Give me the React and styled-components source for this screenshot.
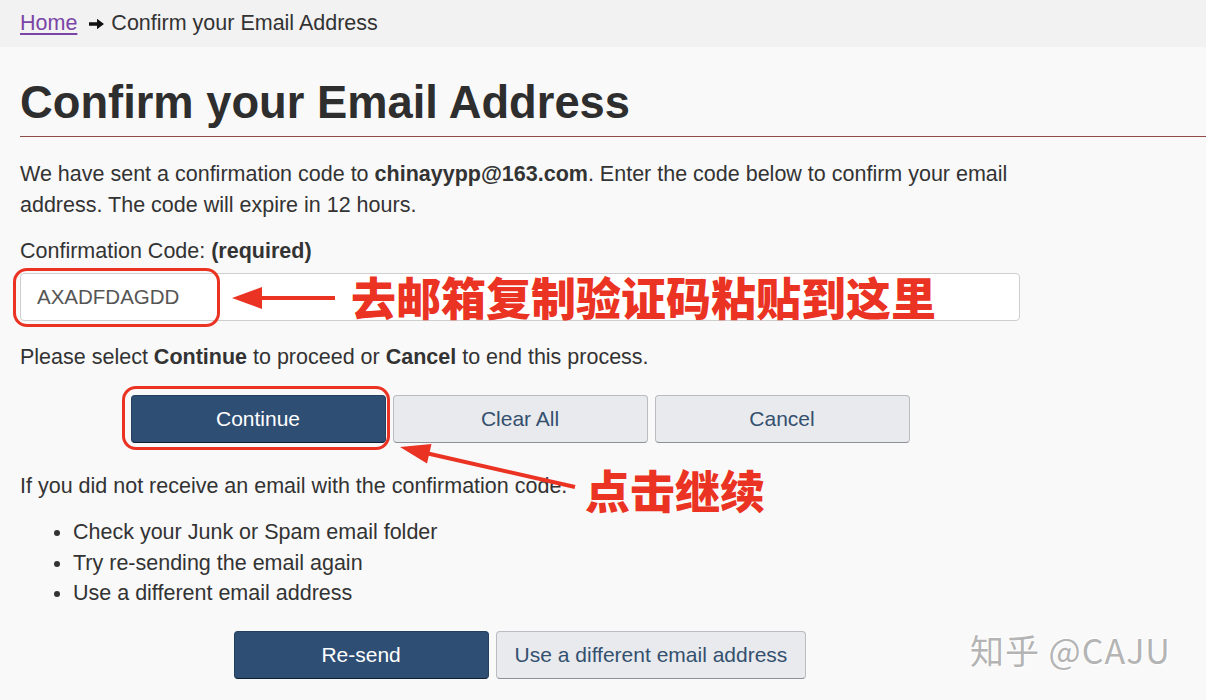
import React from "react";
import styled, { createGlobalStyle } from "styled-components";

const GlobalStyle = createGlobalStyle`
  html, body {
    margin: 0;
    padding: 0;
    background: #f9f9f9;
  }
  body {
    font-family: "Liberation Sans", Arial, Helvetica, sans-serif;
    color: #333;
  }
`;

const Page = styled.div`
  position: relative;
  width: 1206px;
  height: 700px;
  overflow: hidden;
`;

const Breadcrumb = styled.nav`
  height: 47px;
  background: #f2f2f2;
  display: flex;
  align-items: center;
  padding: 0 20px;
  font-size: 21.5px;
  color: #333;
`;

const CrumbLink = styled.a`
  color: #7b45a6;
  text-decoration: underline;
  text-underline-offset: 3px;
`;

const CrumbArrow = styled.svg`
  width: 15px;
  height: 12px;
  margin: 0 7px 0 12px;
`;

const Main = styled.main`
  padding-left: 20px;
`;

const Title = styled.h1`
  margin: 30px 0 0;
  padding-bottom: 7px;
  font-size: 45.3px;
  line-height: 52px;
  font-weight: 700;
  color: #2e2e2e;
  border-bottom: 1px solid #8f4b47;
`;

const Content = styled.div`
  width: 1000px;
  font-size: 21.5px;
  line-height: 31px;
  color: #333;
`;

const Text = styled.p`
  margin: ${(p) => p.$mt}px 0 0;
`;

const FieldWrap = styled.div`
  position: relative;
  margin-top: 6px;
`;

const Input = styled.input`
  display: block;
  box-sizing: border-box;
  width: 1000px;
  height: 48px;
  padding: 0 16px;
  border: 1px solid #cfcfcf;
  border-radius: 4px;
  background: #fff;
  font-family: inherit;
  font-size: 20.5px;
  color: #555;
  outline: none;
`;

const ActionBlock = styled.div`
  position: relative;
  margin-top: ${(p) => p.$mt}px;
`;

const ButtonRow = styled.div`
  display: flex;
  justify-content: center;
  gap: 7px;
`;

const Button = styled.button`
  box-sizing: border-box;
  height: 48px;
  min-width: 255px;
  padding: 0 18px;
  border-radius: 4px;
  font-family: inherit;
  font-size: 21px;
  cursor: pointer;
  background: ${(p) => (p.$primary ? "#2f4e73" : "#e8eaed")};
  color: ${(p) => (p.$primary ? "#fff" : "#34506f")};
  border: 1px solid ${(p) => (p.$primary ? "#24405f" : "#b9bcc0")};
  border-bottom-color: ${(p) => (p.$primary ? "#0f1f33" : "#8d9096")};
`;

const List = styled.ul`
  margin: 15px 0 0;
  padding-left: 53px;
  line-height: 30.5px;
`;

const RedBox = styled.div`
  position: absolute;
  left: ${(p) => p.$x}px;
  top: ${(p) => p.$y}px;
  width: ${(p) => p.$w}px;
  height: ${(p) => p.$h}px;
  box-sizing: border-box;
  border: 3.5px solid #eb3323;
  border-radius: 14px;
  pointer-events: none;
`;

const ArrowSvg = styled.svg`
  position: absolute;
  left: ${(p) => p.$x}px;
  top: ${(p) => p.$y}px;
  overflow: visible;
  pointer-events: none;
`;

const Note = styled.div`
  position: absolute;
  left: ${(p) => p.$x}px;
  top: ${(p) => p.$y}px;
  font-family: "Noto Sans CJK SC", sans-serif;
  font-weight: 900;
  font-size: 45px;
  line-height: 50px;
  color: #eb3323;
  white-space: nowrap;
  pointer-events: none;
`;

const Watermark = styled.div`
  position: absolute;
  left: 970px;
  top: 627px;
  font-family: "Noto Sans CJK SC", sans-serif;
  font-size: 34px;
  line-height: 46px;
  color: #b4b4b4;
  letter-spacing: 1px;
  text-shadow: 0 0 1px #fff, 1px 1px 0 #fff, -1px -1px 0 #fff;
  white-space: nowrap;
`;

const App = () => {
  return (
    <Page>
      <GlobalStyle />
      <Breadcrumb>
        <CrumbLink href="#">Home</CrumbLink>
        <CrumbArrow viewBox="0 0 15 12">
          <path d="M0 4.3h8V0.8l7 5.2-7 5.2V7.7H0z" fill="#111" />
        </CrumbArrow>
        <span>Confirm your Email Address</span>
      </Breadcrumb>

      <Main>
        <Title>Confirm your Email Address</Title>
        <Content>
          <Text $mt={22}>
            We have sent a confirmation code to{" "}
            <strong>chinayypp@163.com</strong>. Enter the code below to confirm
            your email address. The code will expire in 12 hours.
          </Text>
          <Text $mt={15}>
            Confirmation Code: <strong>(required)</strong>
          </Text>
          <FieldWrap>
            <Input type="text" value="AXADFDAGDD" readOnly />
            <RedBox $x={-7} $y={-5} $w={207} $h={59} />
            <ArrowSvg $x={205} $y={10} width="120" height="30">
              <line x1="34" y1="15" x2="110" y2="15" stroke="#eb3323" strokeWidth="4" />
              <polygon points="7,15 37,4 37,26" fill="#eb3323" />
            </ArrowSvg>
            <Note $x={331} $y={-1}>去邮箱复制验证码粘贴到这里</Note>
          </FieldWrap>
          <Text $mt={21}>
            Please select <strong>Continue</strong> to proceed or{" "}
            <strong>Cancel</strong> to end this process.
          </Text>

          <ActionBlock $mt={22}>
            <ButtonRow>
              <Button $primary>Continue</Button>
              <Button>Clear All</Button>
              <Button>Cancel</Button>
            </ButtonRow>
            <Text $mt={28}>
              If you did not receive an email with the confirmation code.
            </Text>
            <RedBox $x={102} $y={-9} $w={268} $h={64} />
            <ArrowSvg $x={370} $y={40} width="200" height="60">
              <line x1="38" y1="18.5" x2="185" y2="52" stroke="#eb3323" strokeWidth="4" />
              <polygon points="10,12 37,28.4 41.5,8.9" fill="#eb3323" />
            </ArrowSvg>
            <Note $x={565} $y={70}>点击继续</Note>
          </ActionBlock>

          <List>
            <li>Check your Junk or Spam email folder</li>
            <li>Try re-sending the email again</li>
            <li>Use a different email address</li>
          </List>

          <ActionBlock $mt={22}>
            <ButtonRow>
              <Button $primary>Re-send</Button>
              <Button>Use a different email address</Button>
            </ButtonRow>
          </ActionBlock>
        </Content>
      </Main>

      <Watermark>知乎 @CAJU</Watermark>
    </Page>
  );
};

export default App;
